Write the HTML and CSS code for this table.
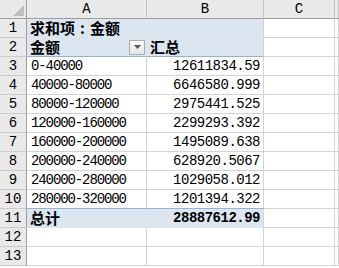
FILE: index.html
```html
<!DOCTYPE html>
<html>
<head>
  <title>求和项:金额</title>
  <link rel="stylesheet" href="styles.css">
</head>
<body>
  <table class="sheet">
    <colgroup>
      <col class="col-rownum">
      <col class="col-a">
      <col class="col-b">
      <col class="col-c">
      <col class="col-d">
    </colgroup>
    <tr class="col-heads">
      <th class="corner">
        <svg width="11" height="11" viewBox="0 0 11 11"><polygon points="11,0 11,11 0,11" fill="#bdbdbd"/></svg>
      </th>
      <th>A</th>
      <th>B</th>
      <th>C</th>
      <th></th>
    </tr>
    <tr>
      <th class="rownum">1</th>
      <td class="pivot cn bold">求和项<span class="colon">:</span>金额</td>
      <td class="pivot last"></td>
      <td></td>
      <td></td>
    </tr>
    <tr>
      <th class="rownum">2</th>
      <td class="pivot head-line field-cell">
        <div class="field">
          <span class="field-name bold">金额</span>
          <span class="drop"><svg width="7" height="4" viewBox="0 0 7 4"><polygon points="0,0 7,0 3.5,4" fill="#555"/></svg></span>
        </div>
      </td>
      <td class="pivot last head-line cn bold">汇总</td>
      <td></td>
      <td></td>
    </tr>
    <tr><th class="rownum">3</th><td class="num">0-40000</td><td class="num val">12611834.59</td><td></td><td></td></tr>
    <tr><th class="rownum">4</th><td class="num">40000-80000</td><td class="num val">6646580.999</td><td></td><td></td></tr>
    <tr><th class="rownum">5</th><td class="num">80000-120000</td><td class="num val">2975441.525</td><td></td><td></td></tr>
    <tr><th class="rownum">6</th><td class="num">120000-160000</td><td class="num val">2299293.392</td><td></td><td></td></tr>
    <tr><th class="rownum">7</th><td class="num">160000-200000</td><td class="num val">1495089.638</td><td></td><td></td></tr>
    <tr><th class="rownum">8</th><td class="num">200000-240000</td><td class="num val">628920.5067</td><td></td><td></td></tr>
    <tr><th class="rownum">9</th><td class="num">240000-280000</td><td class="num val">1029058.012</td><td></td><td></td></tr>
    <tr><th class="rownum">10</th><td class="num head-line">280000-320000</td><td class="num val head-line">1201394.322</td><td></td><td></td></tr>
    <tr>
      <th class="rownum">11</th>
      <td class="pivot cn bold">总计</td>
      <td class="pivot last num val total">28887612.99</td>
      <td></td>
      <td></td>
    </tr>
    <tr><th class="rownum">12</th><td></td><td></td><td></td><td></td></tr>
    <tr><th class="rownum">13</th><td></td><td></td><td></td><td></td></tr>
  </table>
</body>
</html>
```

FILE: styles.css
```css
/* Spreadsheet grid */

html, body {
    margin: 0;
    padding: 0;
    background: #fff;
    overflow: hidden;
}

.sheet {
    table-layout: fixed;
    width: 339px;
    border-collapse: separate;
    border-spacing: 0;
    font-family: "Liberation Mono", monospace;
    font-size: 14px;
    color: #000;
}

.col-rownum { width: 27px; }
.col-a { width: 120px; }
.col-b { width: 117px; }
.col-c { width: 71px; }
.col-d { width: 4px; }

.sheet tr {
    height: 19px;
}

.sheet td,
.sheet th {
    padding: 0 4px;
    line-height: 18px;
    border-right: 1px solid #d4d4d4;
    border-bottom: 1px solid #d4d4d4;
    white-space: nowrap;
    vertical-align: middle;
    box-sizing: border-box;
}

/* Headers */

.col-heads th {
    background: #e9e9e9;
    font-weight: normal;
    text-align: center;
    border-right-color: #c6c6c6;
    border-bottom-color: #9e9e9e;
}

.col-heads th.corner {
    text-align: right;
    vertical-align: bottom;
    padding: 0 2px 2px 0;
    border-right-color: #9e9e9e;
    line-height: 0;
}

.sheet th.rownum {
    background: #e9e9e9;
    font-weight: normal;
    text-align: center;
    border-right-color: #9e9e9e;
    border-bottom-color: #cbcbcb;
    padding: 0;
}

/* Pivot table */

.sheet .pivot {
    background: #dce6f1;
    border-right-color: #dce6f1;
    border-bottom-color: #dce6f1;
}

.sheet .pivot.last {
    border-right-color: #d4d4d4;
}

.sheet .head-line {
    border-bottom-color: #95b3d7;
}

.sheet .cn,
.field-name {
    font-family: "Noto Sans CJK SC", sans-serif;
    font-size: 15px;
}

.sheet .cn {
    padding-left: 3px;
}

.sheet .field-cell {
    padding: 0 1px 0 3px;
}

.bold {
    font-weight: bold;
}

.colon {
    display: inline-block;
    width: 15px;
    text-align: center;
}

.field {
    display: flex;
    align-items: center;
    justify-content: space-between;
}

.drop {
    display: flex;
    align-items: center;
    justify-content: center;
    width: 16px;
    height: 15px;
    box-sizing: border-box;
    border: 1px solid #ababab;
    background: linear-gradient(#fbfbfb, #e4e4e4);
}

.num {
    letter-spacing: -1.1px;
}

.sheet .val {
    text-align: right;
    letter-spacing: -0.5px;
    padding-right: 3px;
}

.total {
    font-weight: bold;
    letter-spacing: 0.5px;
}
```
